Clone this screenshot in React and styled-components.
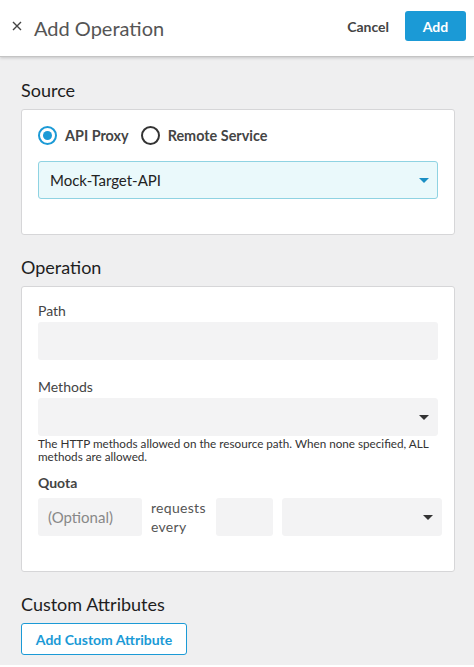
import React from "react";
import styled, { createGlobalStyle } from "styled-components";

const blue = "#1b9ad6";

const GlobalStyle = createGlobalStyle`
  html, body {
    margin: 0;
    padding: 0;
    background: #fff;
  }
  body {
    font-family: Lato, "Open Sans", sans-serif;
    color: #222;
  }
  * {
    box-sizing: border-box;
  }
`;

const Page = styled.div`
  width: 474px;
`;

const Header = styled.header`
  height: 57px;
  display: flex;
  align-items: center;
  padding: 0 8px 0 12px;
  background: #fff;
  border-bottom: 1px solid #c4c4c4;
  box-shadow: 0 1px 3px rgba(0, 0, 0, 0.18);
  position: relative;
  z-index: 1;
`;

const CloseButton = styled.button`
  border: none;
  background: none;
  padding: 0;
  width: 10px;
  height: 10px;
  display: flex;
  margin-top: -4px;
  cursor: pointer;
`;

const Title = styled.h1`
  margin: 0 0 0 12px;
  font-size: 20px;
  font-weight: 400;
  color: #555;
  flex: 1;
  line-height: 24px;
`;

const TextButton = styled.button`
  border: none;
  background: none;
  font-family: inherit;
  font-size: 14px;
  font-weight: 700;
  color: #444;
  padding: 0;
  margin-top: -4px;
  cursor: pointer;
`;

const PrimaryButton = styled.button`
  margin-left: 16px;
  width: 61px;
  height: 30px;
  border: none;
  border-radius: 3px;
  background: ${blue};
  color: #fff;
  font-family: inherit;
  font-size: 14px;
  font-weight: 700;
  margin-top: -4px;
  cursor: pointer;
`;

const Body = styled.main`
  background: #efeff0;
  padding: 22px 19px 10px 21px;
`;

const Section = styled.section`
  margin-bottom: ${(p) => (p.$last ? 0 : "21px")};
`;

const SectionTitle = styled.h2`
  margin: 0 0 8px;
  font-size: 18px;
  line-height: 22px;
  font-weight: 400;
  color: #1e1e1e;
`;

const Card = styled.div`
  background: #fff;
  border: 1px solid #d6d6d8;
  border-radius: 3px;
  padding: 15px 16px 35px 16px;
`;

const RadioRow = styled.div`
  display: flex;
  align-items: center;
  height: 20px;
  margin-bottom: 16px;
`;

const RadioLabel = styled.label`
  display: flex;
  align-items: center;
  gap: 8px;
  margin-right: 12px;
  font-size: 14.4px;
  font-weight: 700;
  color: #444;
`;

const RadioCircle = styled.span`
  width: 19px;
  height: 19px;
  border-radius: 50%;
  border: 2px solid ${(p) => (p.$checked ? blue : "#333")};
  display: flex;
  align-items: center;
  justify-content: center;

  &::after {
    content: "";
    width: 9px;
    height: 9px;
    border-radius: 50%;
    background: ${(p) => (p.$checked ? blue : "transparent")};
  }
`;

const SelectBox = styled.div`
  height: 38px;
  display: flex;
  align-items: center;
  justify-content: space-between;
  padding: 0 8px 0 11px;
  border-radius: 3px;
  font-size: 15px;
  color: #222;
  background: ${(p) => (p.$active ? "#eaf9fb" : "#f3f3f4")};
  border: 1px solid ${(p) => (p.$active ? "#8fd3e2" : "#f3f3f4")};
`;

const Caret = styled.span`
  width: 0;
  height: 0;
  border-left: 5px solid transparent;
  border-right: 5px solid transparent;
  border-top: 5px solid ${(p) => p.$color || "#333"};
`;

const Field = styled.div`
  margin-bottom: ${(p) => p.$gap || "18px"};
`;

const Label = styled.div`
  font-size: 14px;
  line-height: 18px;
  color: #444;
  font-weight: ${(p) => (p.$bold ? 700 : 400)};
  margin-bottom: ${(p) => p.$mb || "2px"};
`;

const TextInput = styled.input`
  display: block;
  width: 100%;
  height: 38px;
  border: none;
  border-radius: 3px;
  background: #f3f3f4;
  padding: 0 10px;
  font-family: inherit;
  font-size: 15px;
  color: #222;
  outline: none;

  &::placeholder {
    color: #888;
  }
`;

const Help = styled.p`
  margin: 1px 0 0;
  font-size: 11.7px;
  line-height: 12.5px;
  color: #333;
`;

const QuotaRow = styled.div`
  display: grid;
  grid-template-columns: 104px 56px 57px 1fr;
  column-gap: 9px;
  align-items: center;
  margin-right: -4px;
`;

const QuotaText = styled.span`
  font-size: 14px;
  line-height: 19px;
  color: #555;
  letter-spacing: 0.3px;
`;

const OutlineButton = styled.button`
  height: 32px;
  width: 166px;
  border: 1px solid ${blue};
  border-radius: 3px;
  background: #fff;
  color: ${blue};
  font-family: inherit;
  font-size: 14px;
  font-weight: 700;
  cursor: pointer;
`;

const CloseIcon = () => (
  <svg width="10" height="10" viewBox="0 0 10 10">
    <path d="M1 1L9 9M9 1L1 9" stroke="#444" strokeWidth="1.4" fill="none" />
  </svg>
);

const Radio = ({ checked, children }) => (
  <RadioLabel>
    <RadioCircle $checked={checked} />
    {children}
  </RadioLabel>
);

export default function App() {
  return (
    <Page>
      <GlobalStyle />
      <Header>
        <CloseButton aria-label="Close">
          <CloseIcon />
        </CloseButton>
        <Title>Add Operation</Title>
        <TextButton>Cancel</TextButton>
        <PrimaryButton>Add</PrimaryButton>
      </Header>

      <Body>
        <Section>
          <SectionTitle>Source</SectionTitle>
          <Card>
            <RadioRow>
              <Radio checked>API Proxy</Radio>
              <Radio>Remote Service</Radio>
            </RadioRow>
            <SelectBox $active>
              Mock-Target-API
              <Caret $color="#1a8fc4" />
            </SelectBox>
          </Card>
        </Section>

        <Section>
          <SectionTitle>Operation</SectionTitle>
          <Card>
            <Field>
              <Label>Path</Label>
              <TextInput />
            </Field>
            <Field $gap="12px">
              <Label>Methods</Label>
              <SelectBox>
                <span />
                <Caret />
              </SelectBox>
              <Help>
                The HTTP methods allowed on the resource path. When none
                specified, ALL methods are allowed.
              </Help>
            </Field>
            <Field $gap="0">
              <Label $bold $mb="6px">
                Quota
              </Label>
              <QuotaRow>
                <TextInput placeholder="(Optional)" />
                <QuotaText>requests every</QuotaText>
                <TextInput />
                <SelectBox>
                  <span />
                  <Caret />
                </SelectBox>
              </QuotaRow>
            </Field>
          </Card>
        </Section>

        <Section $last>
          <SectionTitle>Custom Attributes</SectionTitle>
          <OutlineButton>Add Custom Attribute</OutlineButton>
        </Section>
      </Body>
    </Page>
  );
}
